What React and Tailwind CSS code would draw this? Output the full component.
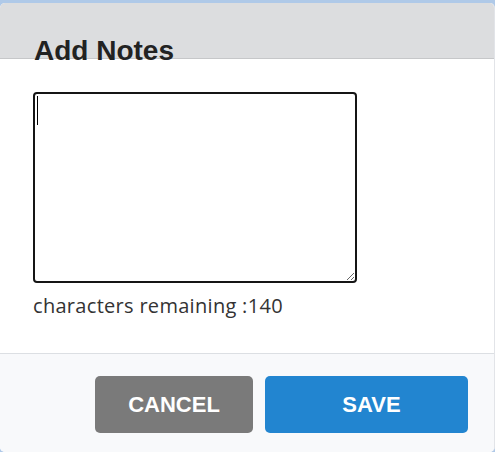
export default function App() {
  return (
    <div className="w-[495px] h-[452px] bg-[#afc9e8] pt-[3px] overflow-hidden">
      <div className="h-[449px] bg-white rounded-[5px] overflow-hidden flex flex-col border-r border-[#e2e4e8]">
        <div className="h-[56px] shrink-0 bg-[#dcdddf] border-b border-[#c6c7c9] pl-[34px] pt-[33px] relative z-10">
          <h2 className="text-[28px] leading-[30px] font-bold text-[#222] font-['Liberation_Sans',Arial,sans-serif] whitespace-nowrap">
            Add Notes
          </h2>
        </div>
        <div className="flex-1 bg-white pl-[33px] pt-[33px]">
          <div className="relative w-[324px] h-[191px]">
            <textarea className="block w-full h-full border-2 border-[#151515] rounded-[4px] bg-white outline-none" />
            <span className="absolute left-[4px] top-[4px] w-px h-[29px] bg-black" />
          </div>
          <p className="mt-[11px] text-[20px] leading-[24px] text-[#333] font-['Open_Sans',sans-serif] tracking-[0.3px]">
            characters remaining :140
          </p>
        </div>
        <div className="h-[99px] shrink-0 bg-[#f8f9fb] border-t border-[#dcdfe3] flex justify-end items-start gap-[12px] pr-[26px] pt-[22px]">
          <button className="w-[158px] h-[57px] rounded-[5px] bg-[#7a7a7a] text-white text-[22px] font-bold font-['Liberation_Sans',Arial,sans-serif]">
            CANCEL
          </button>
          <button className="w-[203px] h-[57px] rounded-[5px] bg-[#2285d0] text-white text-[22px] font-bold font-['Liberation_Sans',Arial,sans-serif] pl-[10px]">
            SAVE
          </button>
        </div>
      </div>
    </div>
  );
}
